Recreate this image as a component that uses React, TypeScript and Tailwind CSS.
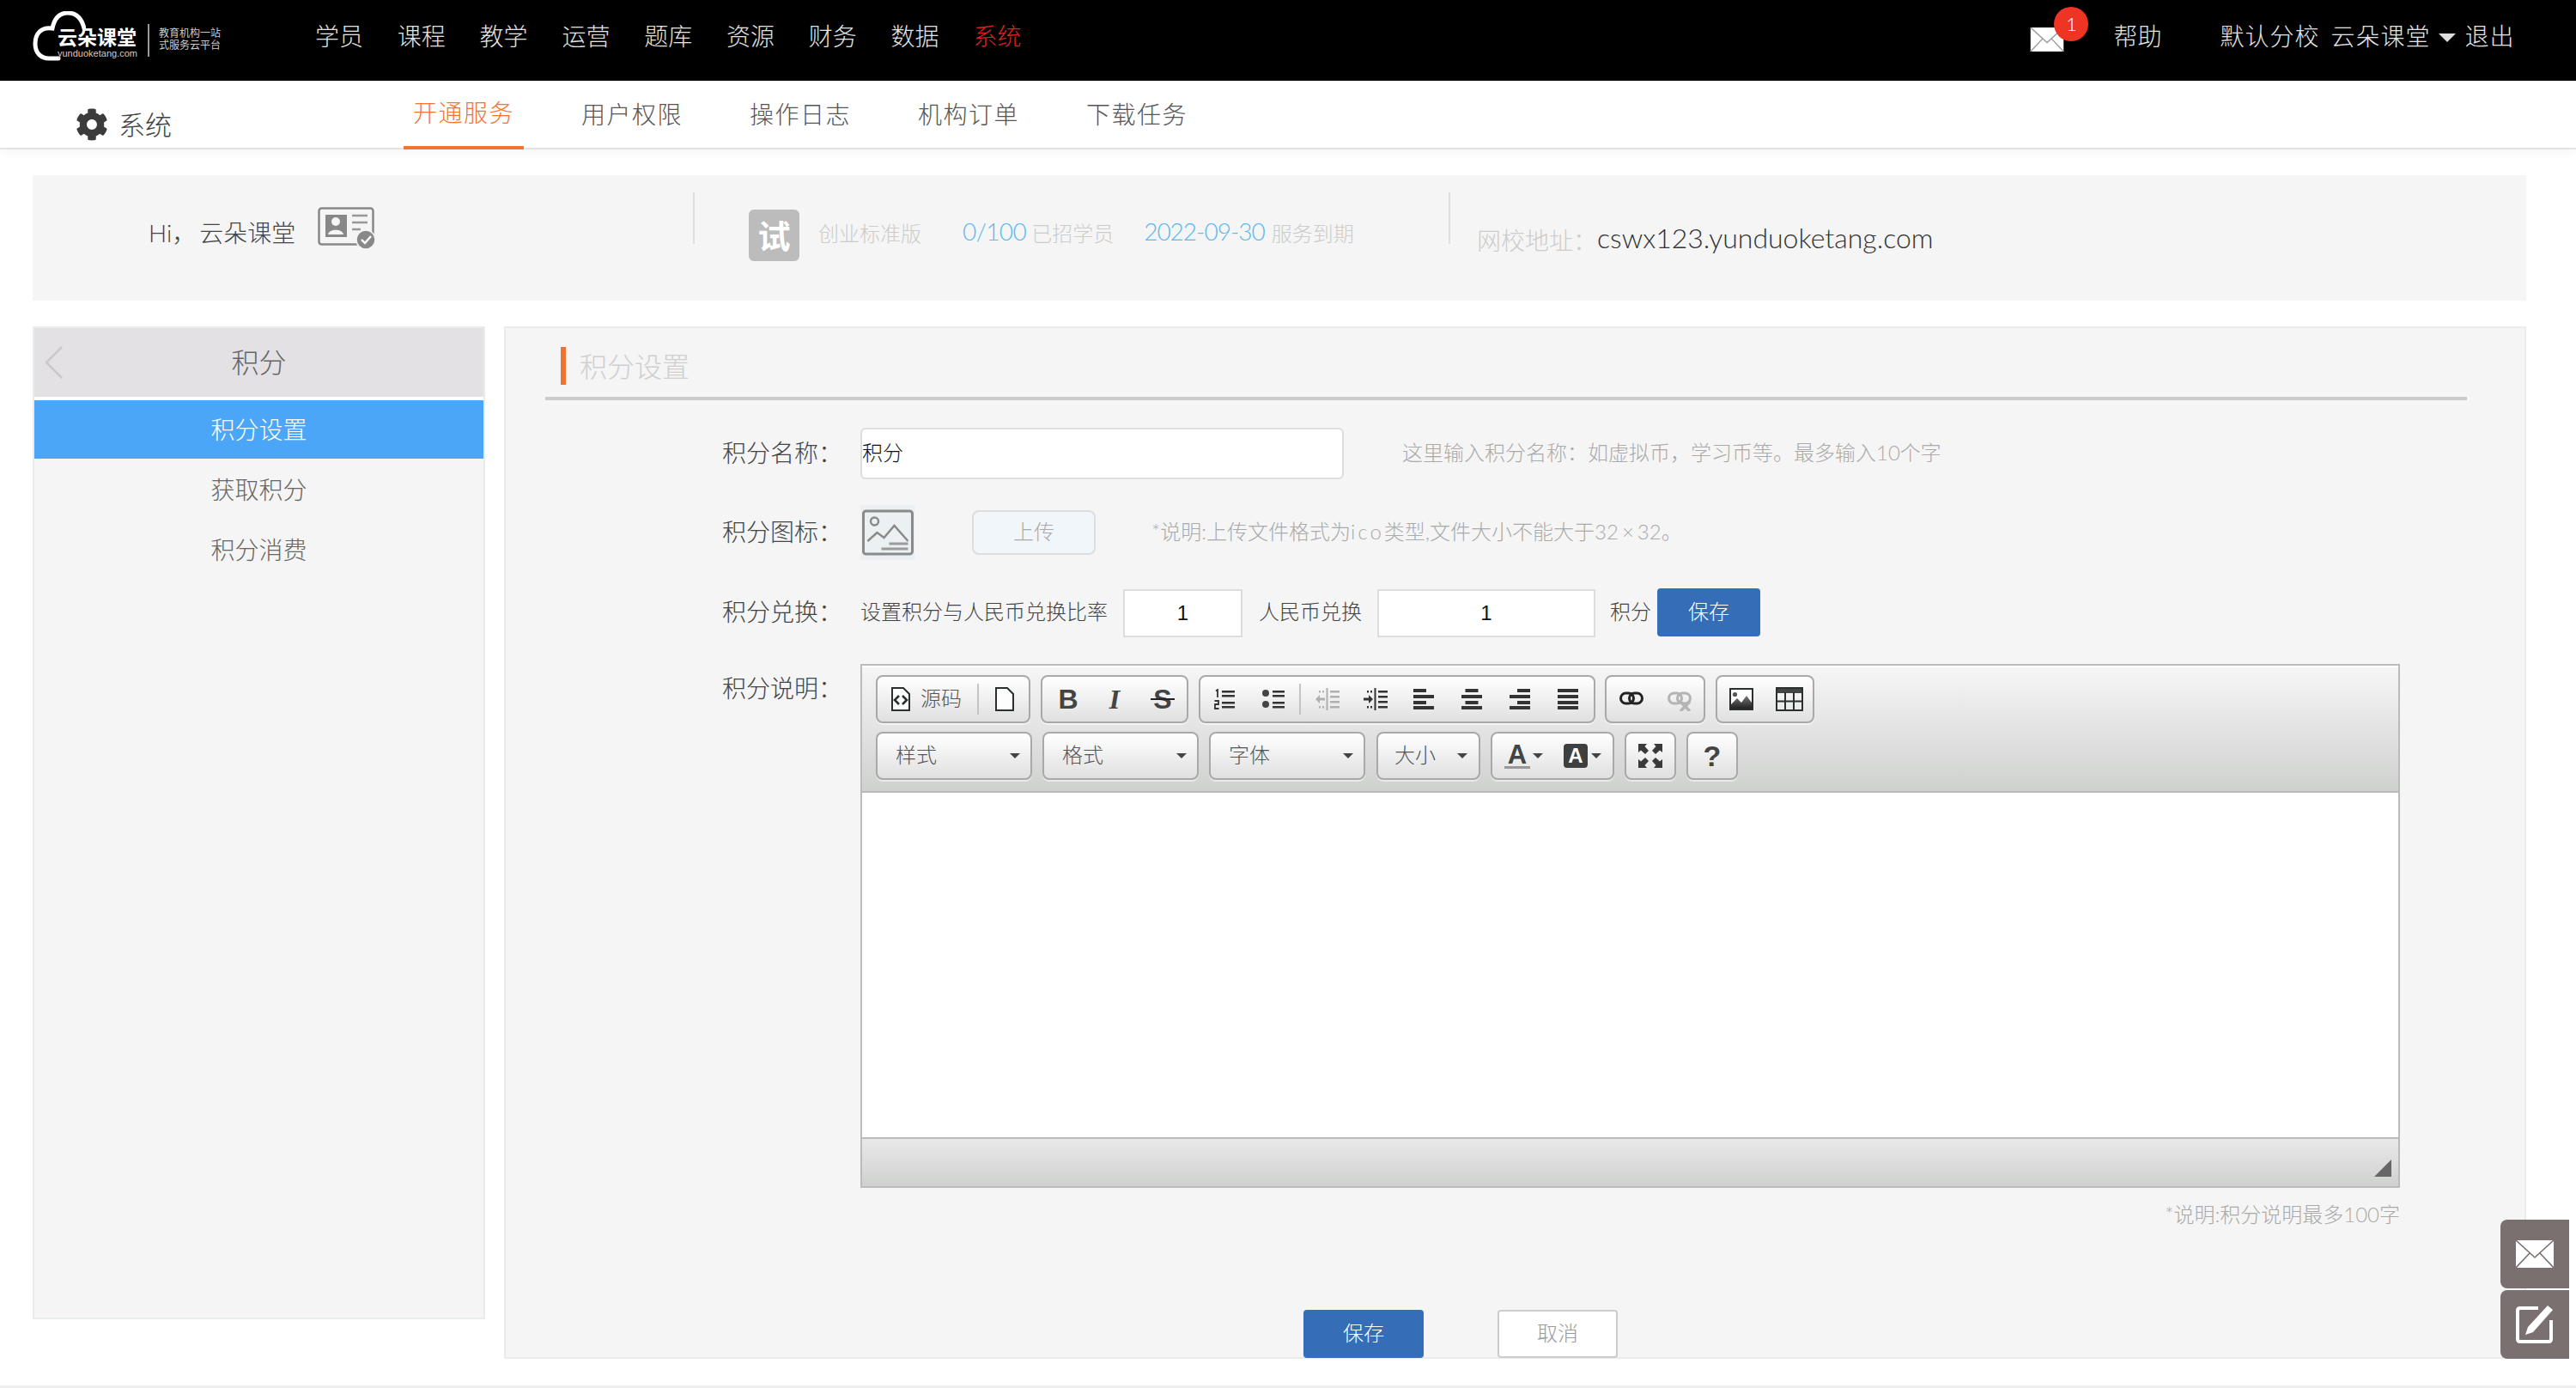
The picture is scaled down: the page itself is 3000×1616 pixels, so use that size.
import React from "react";
import { FaCog } from "react-icons/fa";

const Page = ({ glyph }: { glyph?: boolean }) => (
  <svg width="22" height="28" viewBox="0 0 22 28" className="shrink-0">
    <path d="M1 1H14L21 8V27H1Z" fill="#fdfdfd" stroke="#2a2f2f" strokeWidth="2" />
    {glyph && (
      <g fill="none" stroke="#2a2f2f" strokeWidth="2.6">
        <path d="M9 10L4 15L9 20" />
        <path d="M13 10L18 15L13 20" />
      </g>
    )}
  </svg>
);

const Lines = ({ rows, h = 4, fill = "#333" }: { rows: number[][]; h?: number; fill?: string }) => (
  <svg width="24" height="24" viewBox="0 0 24 24" className="shrink-0">
    {rows.map((r, i) => (
      <rect key={i} x={r[0]} y={r[2]} width={r[1]} height={h} fill={fill} />
    ))}
  </svg>
);

const NumList = () => (
  <svg width="24" height="24" viewBox="0 0 24 24" className="shrink-0">
    <g fill="#333">
      <rect x="9" y="2" width="15" height="2.5" />
      <rect x="9" y="7" width="15" height="2.5" />
      <rect x="9" y="15" width="15" height="2.5" />
      <rect x="9" y="20" width="15" height="2.5" />
    </g>
    <path d="M2 2.5L4 1V10" fill="none" stroke="#333" strokeWidth="1.8" />
    <path d="M0.5 14H5V18H1V23H5.5" fill="none" stroke="#333" strokeWidth="1.8" />
  </svg>
);

const BulList = () => (
  <svg width="26" height="24" viewBox="0 0 26 24" className="shrink-0">
    <circle cx="4" cy="5" r="4" fill="#444" />
    <circle cx="4" cy="18" r="4" fill="#444" />
    <g fill="#333">
      <rect x="12" y="2" width="14" height="2.5" />
      <rect x="12" y="7" width="14" height="2.5" />
      <rect x="12" y="15" width="14" height="2.5" />
      <rect x="12" y="20" width="14" height="2.5" />
    </g>
  </svg>
);

const Dent = ({ dir, c }: { dir: "in" | "out"; c: string }) => (
  <svg width="28" height="26" viewBox="0 0 28 26" className="shrink-0">
    <rect x="12.5" y="0" width="2" height="26" fill={c} />
    <g fill={c}>
      <rect x="17" y="3" width="11" height="2.5" />
      <rect x="17" y="9" width="11" height="2.5" />
      <rect x="17" y="15" width="11" height="2.5" />
      <rect x="17" y="21" width="11" height="2.5" />
      <rect x="4" y="3" width="2" height="2.5" />
      <rect x="8" y="3" width="2" height="2.5" />
      <rect x="4" y="21" width="2" height="2.5" />
      <rect x="8" y="21" width="2" height="2.5" />
    </g>
    {dir === "in" ? (
      <path d="M0 11.5H6V8L11 13L6 18V14.5H0Z" fill={c} />
    ) : (
      <path d="M11 11.5H5V8L0 13L5 18V14.5H11Z" fill={c} />
    )}
  </svg>
);

const LinkI = ({ c, x }: { c: string; x?: boolean }) => (
  <svg width="28" height="28" viewBox="0 0 28 28" className="shrink-0">
    <g fill="none" stroke={c} strokeWidth="3">
      <rect x="1.5" y="7" width="15" height="12" rx="6" />
      <rect x="11.5" y="7" width="15" height="12" rx="6" />
    </g>
    {x && <path d="M15 17L26 28M26 17L15 28" stroke={c} strokeWidth="3.4" />}
  </svg>
);

const ImgI = () => (
  <svg width="28" height="26" viewBox="0 0 28 26" className="shrink-0">
    <defs>
      <linearGradient id="mt" x1="0" y1="0" x2="0" y2="1">
        <stop offset="0" stopColor="#777" />
        <stop offset="1" stopColor="#222" />
      </linearGradient>
    </defs>
    <rect x="1" y="1" width="26" height="24" fill="#fff" stroke="#2a2f2f" strokeWidth="2" />
    <circle cx="6.5" cy="7.5" r="2.6" fill="#555" />
    <path d="M2 19L9 12L14 17L20 9L26 17V24H2Z" fill="url(#mt)" />
  </svg>
);

const TableI = () => (
  <svg width="32" height="28" viewBox="0 0 32 28" className="shrink-0">
    <rect x="0" y="0" width="32" height="7" fill="#444" />
    <rect x="1" y="1" width="30" height="26" fill="none" stroke="#2a2f2f" strokeWidth="2" />
    <path d="M11 6V27M21 6V27M1 16.5H31" stroke="#2a2f2f" strokeWidth="2" />
  </svg>
);

const MaxI = () => (
  <svg width="28" height="28" viewBox="0 0 28 28" className="shrink-0">
    <g fill="#3a3a3a">
      <path d="M0 0H10L7.5 3L12 8L8 12L3 7.5L0 10Z" />
      <path d="M28 0H18L20.5 3L16 8L20 12L25 7.5L28 10Z" />
      <path d="M0 28H10L7.5 25L12 20L8 16L3 20.5L0 18Z" />
      <path d="M28 28H18L20.5 25L16 20L20 16L25 20.5L28 18Z" />
    </g>
  </svg>
);

const Arrow = ({ className = "" }: { className?: string }) => (
  <span className={`block w-0 h-0 border-x-[6px] border-x-transparent border-t-[6px] border-t-[#444] ${className}`} />
);

const Btn = ({ w, ml = "", children }: { w: string; ml?: string; children: React.ReactNode }) => (
  <div
    className={`${w} ${ml} h-[56px] shrink-0 flex items-center rounded-[8px] border-2 border-[#a9a9a9] bg-linear-to-b from-white to-[#dfe0df] shadow-[0_2px_0_rgba(255,255,255,0.5)]`}
  >
    {children}
  </div>
);

const Sep = ({ className = "" }: { className?: string }) => (
  <span className={`block w-[2px] h-[36px] bg-[#c4c4c4] shrink-0 ${className}`} />
);

const Combo = ({ w, ml, pl, label, gap }: { w: string; ml: string; pl: string; label: string; gap: string }) => (
  <Btn w={w} ml={ml}>
    <span className={`${pl} pb-[2px] text-[24px] text-[#555] leading-none`}>{label}</span>
    <Arrow className={gap} />
  </Btn>
);

const Envelope = ({ w, h, line }: { w: number; h: number; line: string }) => (
  <svg width={w} height={h} viewBox="0 0 44 32" className="shrink-0">
    <rect x="0" y="0" width="44" height="32" fill="#fff" />
    <path d="M0 0L22 20L44 0M0 32L16 15M44 32L28 15" fill="none" stroke={line} strokeWidth="1.6" />
  </svg>
);

const Cloud = () => (
  <svg width="62" height="58" viewBox="0 0 62 58" className="shrink-0">
    <path
      d="M60 20C57 8 50 2 41 2C30 2 25 10 23 20C10 18 3 26 3 38C3 49 10 55 19 55H30"
      fill="none"
      stroke="#fff"
      strokeWidth="5"
      strokeLinecap="round"
    />
  </svg>
);

const NAV = ["学员", "课程", "教学", "运营", "题库", "资源", "财务", "数据"];
const TABS = ["开通服务", "用户权限", "操作日志", "机构订单", "下载任务"];

export default function App() {
  return (
    <div className="relative w-[3000px] h-[1616px] overflow-hidden bg-white border-b-[3px] border-[#eeeeee] font-[Lato,'Noto_Sans_CJK_SC',sans-serif] font-light text-[#444]">
      {/* top bar */}
      <header className="h-[94px] bg-black flex items-center pb-[10px] text-[28px] text-[#e4e4e4]">
        <div className="w-[367px] h-[84px] shrink-0 flex items-center pl-[38px]">
          <Cloud />
          <div className="-ml-[33px] mt-[14px] flex flex-col font-normal">
            <span className="text-[23px] leading-[26px] font-bold text-white whitespace-nowrap">云朵课堂</span>
            <span className="text-[11px] leading-[12px] font-['Liberation_Sans'] text-[#ccc] whitespace-nowrap">yunduoketang.com</span>
          </div>
          <span className="block w-[2px] h-[38px] bg-[#999] ml-[12px] mt-[9px]" />
          <div className="ml-[11px] mt-[8px] flex flex-col text-[12px] leading-[14px] text-[#ccc] font-normal">
            <span className="whitespace-nowrap">教育机构一站</span>
            <span className="whitespace-nowrap">式服务云平台</span>
          </div>
        </div>
        <nav className="flex gap-[39.8px]">
          {NAV.map((n) => (
            <span key={n} className="w-[56px]">{n}</span>
          ))}
          <span className="w-[56px] text-[#d8231f]">系统</span>
        </nav>
        <div className="relative ml-[1175px] w-[40px] h-[28px] mt-[8px] shrink-0">
          <Envelope w={40} h={28} line="#999" />
          <span className="absolute left-[28px] -top-[24px] w-[40px] h-[40px] rounded-full bg-[#ee3524] text-white text-[22px] leading-[40px] text-center">1</span>
        </div>
        <span className="ml-[57px]">帮助</span>
        <span className="ml-[68px] tracking-[1px]">默认分校</span>
        <span className="ml-[13px] tracking-[1px]">云朵课堂</span>
        <span className="ml-[10px] mt-[4px] w-0 h-0 border-x-[10px] border-x-transparent border-t-[10px] border-t-[#ddd]" />
        <span className="ml-[10px] tracking-[1px]">退出</span>
      </header>

      {/* sub nav */}
      <div className="h-[80px] flex border-b-2 border-[#e3e3e3] shadow-[0_4px_10px_rgba(0,0,0,0.04)]">
        <div className="w-[470px] shrink-0 flex items-center pl-[88px] pt-[24px]">
          <FaCog className="text-[38px] text-[#3c3c3c]" />
          <span className="ml-[12px] text-[31px] leading-none">系统</span>
        </div>
        <nav className="flex gap-[56px]">
          {TABS.map((t, i) => (
            <span
              key={t}
              className={
                i === 0
                  ? "w-[140px] h-[80px] pb-[3px] flex items-center justify-center text-[28px] tracking-[1.5px] text-[#f07530] border-b-4 border-[#f07530]"
                  : "w-[140px] h-[78px] flex items-center justify-center text-[28px] tracking-[1.5px] text-[#555]"
              }
            >
              {t}
            </span>
          ))}
        </nav>
      </div>

      <div className="px-[38px] w-[2980px] pt-[30px]">
        {/* info band */}
        <section className="w-[2904px] h-[146px] bg-[#f5f5f5] flex items-start">
          <div className="w-[769px] pl-[135px] h-full flex shrink-0">
            <span className="mt-[50px] text-[28px] leading-[34px] whitespace-nowrap">
              Hi，<span className="ml-[4px]">云朵课堂</span>
            </span>
            <svg width="68" height="50" viewBox="0 0 68 50" className="mt-[37px] ml-[26px]">
              <rect x="1.5" y="1.5" width="63" height="42" rx="3" fill="#f5f5f5" stroke="#888" strokeWidth="2.5" />
              <rect x="9" y="9" width="25" height="26" fill="#888" />
              <circle cx="21" cy="17" r="5" fill="#f5f5f5" />
              <path d="M12 32C13 25 29 25 30 32Z" fill="#f5f5f5" />
              <path d="M40 10H58M40 18H58M40 26H50" stroke="#999" strokeWidth="2.5" />
              <circle cx="56" cy="38" r="11" fill="#888" stroke="#f5f5f5" strokeWidth="1.5" />
              <path d="M51 38L55 42L62 34" fill="none" stroke="#fff" strokeWidth="2.4" />
            </svg>
          </div>
          <span className="mt-[20px] block w-[2px] h-[60px] bg-[#e0e0e0] shrink-0" />
          <div className="flex items-start w-[878px] shrink-0">
            <span className="ml-[63px] mt-[40px] w-[59px] h-[60px] rounded-[6px] bg-[#bcbcbc] text-white text-[38px] leading-[60px] text-center font-bold">试</span>
            <span className="ml-[22px] mt-[54px] text-[24px] leading-[28px] text-[#cccccc] whitespace-nowrap">创业标准版</span>
            <span className="ml-[48px] mt-[47px] text-[28px] tracking-[-0.6px] leading-[36px] text-[#5bb8ee] whitespace-nowrap">0/100</span>
            <span className="ml-[6px] mt-[54px] text-[24px] leading-[28px] text-[#cccccc] whitespace-nowrap">已招学员</span>
            <span className="ml-[35px] mt-[47px] text-[28px] tracking-[-1px] leading-[36px] text-[#5bb8ee] whitespace-nowrap">2022-09-30</span>
            <span className="ml-[8px] mt-[54px] text-[24px] leading-[28px] text-[#cccccc] whitespace-nowrap">服务到期</span>
          </div>
          <span className="mt-[20px] block w-[2px] h-[60px] bg-[#e0e0e0] shrink-0" />
          <span className="ml-[31px] mt-[59px] text-[28px] leading-[34px] text-[#cccccc] whitespace-nowrap">网校地址：</span>
          <span className="mt-[55px] text-[32px] leading-[36px] text-[#333] whitespace-nowrap">cswx123.yunduoketang.com</span>
        </section>

        <div className="flex gap-[22px] mt-[30px] items-start">
          {/* sidebar */}
          <aside className="w-[527px] h-[1156px] shrink-0 bg-[#f5f5f5] border-2 border-[#e8ecec]">
            <div className="grid grid-cols-[1fr_auto_1fr] items-center h-[84px] bg-[#e3e1e3] border-b-4 border-white">
              <svg width="24" height="38" viewBox="0 0 24 38" className="ml-[11px]">
                <path d="M21 1L3 19L21 37" fill="none" stroke="#c9c9c9" strokeWidth="2.5" />
              </svg>
              <span className="text-[32px] text-[#666] leading-none">积分</span>
              <span />
            </div>
            <div className="h-[68px] bg-[#4ca6f8] text-white text-[28px] flex items-center justify-center">积分设置</div>
            <div className="h-[70px] mt-[1px] text-[#666] text-[28px] flex items-center justify-center">获取积分</div>
            <div className="h-[70px] text-[#666] text-[28px] flex items-center justify-center">积分消费</div>
          </aside>

          {/* main */}
          <main className="w-[2355px] h-[1202px] shrink-0 bg-[#f5f5f5] border-2 border-[#e8ecec]">
            <div className="ml-[46px] mr-[67px] h-[84px] border-b-4 border-[#cccccc] pl-[18px] pt-[22px] flex items-start">
              <span className="block w-[6px] h-[44px] bg-[#ee7330]" />
              <span className="ml-[16px] text-[32px] leading-[46px] text-[#cfcfcf]">积分设置</span>
            </div>

            <div className="pl-[252px] pt-[32px]">
              {/* name */}
              <div className="flex items-center h-[60px]">
                <span className="w-[161px] pb-[2px] text-[28px] leading-none shrink-0">积分名称：</span>
                <div className="w-[563px] h-[60px] pb-[2px] rounded-[6px] border-2 border-[#dddddd] bg-white text-[24px] text-[#111] flex items-center shrink-0">积分</div>
                <span className="ml-[68px] pb-[2px] text-[24px] text-[#aaaaaa] whitespace-nowrap">这里输入积分名称：如虚拟币，学习币等。最多输入10个字</span>
              </div>

              {/* icon */}
              <div className="flex items-center h-[64px] mt-[30px]">
                <span className="w-[161px] pb-[2px] text-[28px] leading-none shrink-0">积分图标：</span>
                <svg width="64" height="64" viewBox="0 0 63 64" className="shrink-0">
                  <rect width="63" height="64" fill="#ebf0f2" />
                  <rect x="3" y="7" width="57" height="50" rx="3" fill="none" stroke="#8a8a8a" strokeWidth="3" />
                  <circle cx="16" cy="19" r="4.5" fill="none" stroke="#8a8a8a" strokeWidth="2.5" />
                  <path d="M8 42L19 32L27 38L39 24L55 42" fill="none" stroke="#8a8a8a" strokeWidth="2.5" />
                  <path d="M33 45H55M24 51H55" stroke="#9a9a9a" strokeWidth="3" />
                </svg>
                <div className="ml-[66px] w-[144px] h-[52px] pb-[2px] rounded-[8px] border-2 border-[#dddddd] bg-[#f0f6f9] text-[24px] text-[#aaaaaa] flex items-center justify-center shrink-0">上传</div>
                <span className="ml-[65px] pb-[2px] text-[24px] text-[#aaaaaa] whitespace-nowrap">
                  *说明:上传文件格式为<span className="tracking-[3px]">ico</span>类型,文件大小不能大于32<span className="px-[4px]">×</span>32。
                </span>
              </div>

              {/* exchange */}
              <div className="flex items-start h-[57px] mt-[33px] text-[24px] leading-[54px]">
                <span className="w-[161px] text-[28px] shrink-0">积分兑换：</span>
                <span className="w-[306px] shrink-0 text-[#444]">设置积分与人民币兑换比率</span>
                <div className="w-[139px] h-[56px] mt-[1px] border-2 border-[#dddddd] bg-white flex items-center justify-center text-[#111] font-normal font-['Liberation_Sans'] shrink-0">1</div>
                <span className="ml-[19px] w-[138px] shrink-0 text-[#444]">人民币兑换</span>
                <div className="w-[254px] h-[56px] mt-[1px] border-2 border-[#dddddd] bg-white flex items-center justify-center text-[#111] font-normal font-['Liberation_Sans'] shrink-0">1</div>
                <span className="ml-[17px] w-[55px] shrink-0 text-[#444]">积分</span>
                <div className="w-[120px] h-[56px] pb-[2px] rounded-[4px] bg-[#356db6] text-white flex items-center justify-center shrink-0">保存</div>
              </div>

              {/* editor */}
              <div className="flex items-start mt-[31px]">
                <span className="w-[161px] text-[28px] leading-[56px] shrink-0">积分说明：</span>
                <div className="w-[1793px] h-[610px] border-2 border-[#bbbbbb] bg-white flex flex-col shrink-0">
                  <div className="h-[148px] border-b-2 border-[#bbbbbb] bg-linear-to-b from-[#f6f6f6] to-[#cfd1cf] shadow-[inset_0_2px_0_#fff] pl-[16px] pt-[11px] shrink-0">
                    <div className="flex">
                      <Btn w="w-[180px]">
                        <span className="ml-[16px] flex"><Page glyph /></span>
                        <span className="ml-[12px] pb-[2px] text-[24px] text-[#555] leading-none">源码</span>
                        <Sep className="ml-[18px]" />
                        <span className="ml-[19px] flex"><Page /></span>
                      </Btn>
                      <Btn w="w-[172px]" ml="ml-[12px]">
                        <span className="ml-[18px] w-[24px] text-center text-[32px] leading-none font-bold font-['Liberation_Sans'] text-[#444]">B</span>
                        <span className="ml-[30px] w-[24px] text-center text-[32px] leading-none font-bold italic font-['Liberation_Serif'] text-[#444]">I</span>
                        <span className="relative ml-[30px] w-[28px] text-center text-[32px] leading-none font-bold font-['Liberation_Sans'] text-[#444]">
                          S
                          <span className="absolute left-0 top-[15px] w-[28px] h-[2px] bg-[#222]" />
                        </span>
                      </Btn>
                      <Btn w="w-[462px]" ml="ml-[12px]">
                        <span className="ml-[16px] flex"><NumList /></span>
                        <span className="ml-[32px] flex"><BulList /></span>
                        <Sep className="ml-[17px]" />
                        <span className="ml-[17px] flex"><Dent dir="out" c="#b0b0b0" /></span>
                        <span className="ml-[28px] flex"><Dent dir="in" c="#333" /></span>
                        <span className="ml-[30px] flex"><Lines rows={[[0, 15, 0], [0, 24, 7], [0, 15, 14], [0, 24, 20]]} /></span>
                        <span className="ml-[32px] flex"><Lines rows={[[4.5, 15, 0], [0, 24, 7], [4.5, 15, 14], [0, 24, 20]]} /></span>
                        <span className="ml-[32px] flex"><Lines rows={[[9, 15, 0], [0, 24, 7], [9, 15, 14], [0, 24, 20]]} /></span>
                        <span className="ml-[32px] flex"><Lines rows={[[0, 24, 0], [0, 24, 7], [0, 24, 14], [0, 24, 20]]} /></span>
                      </Btn>
                      <Btn w="w-[117px]" ml="ml-[11px]">
                        <span className="ml-[15px] flex"><LinkI c="#222" /></span>
                        <span className="ml-[28px] flex"><LinkI c="#b4b4b4" x /></span>
                      </Btn>
                      <Btn w="w-[115px]" ml="ml-[12px]">
                        <span className="ml-[14px] flex"><ImgI /></span>
                        <span className="ml-[26px] flex"><TableI /></span>
                      </Btn>
                    </div>
                    <div className="flex mt-[10px]">
                      <Combo w="w-[182px]" ml="" pl="pl-[21px]" label="样式" gap="ml-[85px]" />
                      <Combo w="w-[182px]" ml="ml-[12px]" pl="pl-[21px]" label="格式" gap="ml-[85px]" />
                      <Combo w="w-[182px]" ml="ml-[12px]" pl="pl-[21px]" label="字体" gap="ml-[85px]" />
                      <Combo w="w-[121px]" ml="ml-[13px]" pl="pl-[19px]" label="大小" gap="ml-[25px]" />
                      <Btn w="w-[144px]" ml="ml-[12px]">
                        <span className="ml-[14px] w-[30px] flex flex-col items-center">
                          <span className="text-[31px] leading-[27px] font-bold font-['Liberation_Sans'] text-[#444]">A</span>
                          <span className="block w-[30px] h-[3px] bg-[#999]" />
                        </span>
                        <Arrow className="ml-[3px]" />
                        <span className="ml-[24px] w-[28px] h-[28px] rounded-[4px] bg-[#3f3f3f] text-white text-[24px] leading-[28px] text-center font-bold font-['Liberation_Sans']">A</span>
                        <Arrow className="ml-[4px]" />
                      </Btn>
                      <Btn w="w-[60px]" ml="ml-[12px]">
                        <span className="ml-[14px] flex"><MaxI /></span>
                      </Btn>
                      <Btn w="w-[60px]" ml="ml-[12px]">
                        <span className="w-full text-center text-[34px] leading-none font-bold font-['Liberation_Sans'] text-[#444]">?</span>
                      </Btn>
                    </div>
                  </div>
                  <div className="flex-1 bg-white" />
                  <div className="h-[57px] border-t-2 border-[#bbbbbb] bg-linear-to-b from-[#e8e8e8] to-[#cfd1cf] flex justify-end items-start pt-[24px] pr-[8px] shrink-0">
                    <span className="block w-0 h-0 border-l-[20px] border-l-transparent border-b-[20px] border-b-[#666]" />
                  </div>
                </div>
              </div>

              <div className="w-[1954px] mt-[19px] text-right text-[24px] leading-[24px] text-[#aaaaaa]">*说明:积分说明最多100字</div>

              <div className="flex ml-[677px] mt-[99px]">
                <div className="w-[140px] h-[56px] pb-[2px] rounded-[4px] bg-[#356db6] text-white text-[24px] flex items-center justify-center">保存</div>
                <div className="ml-[86px] w-[140px] h-[56px] pb-[2px] rounded-[4px] border-2 border-[#cccccc] bg-white text-[#999] text-[24px] flex items-center justify-center">取消</div>
              </div>
            </div>
          </main>
        </div>
      </div>

      {/* floating actions */}
      <div className="absolute left-[2912px] top-[1420px] w-[80px] flex flex-col gap-[2px]">
        <div className="h-[80px] rounded-l-[8px] bg-[#7b7070] flex items-center justify-center">
          <Envelope w={44} h={32} line="#7b7070" />
        </div>
        <div className="h-[80px] rounded-l-[8px] bg-[#7b7070] flex items-center justify-center">
          <svg width="44" height="46" viewBox="0 0 44 46">
            <path d="M26 4H5Q2 4 2 7V40Q2 43 5 43H38Q41 43 41 40V18" fill="none" stroke="#fff" strokeWidth="4" />
            <path d="M37 1L43 6L20 32L11 35L14 26Z" fill="#fff" />
          </svg>
        </div>
      </div>
    </div>
  );
}
